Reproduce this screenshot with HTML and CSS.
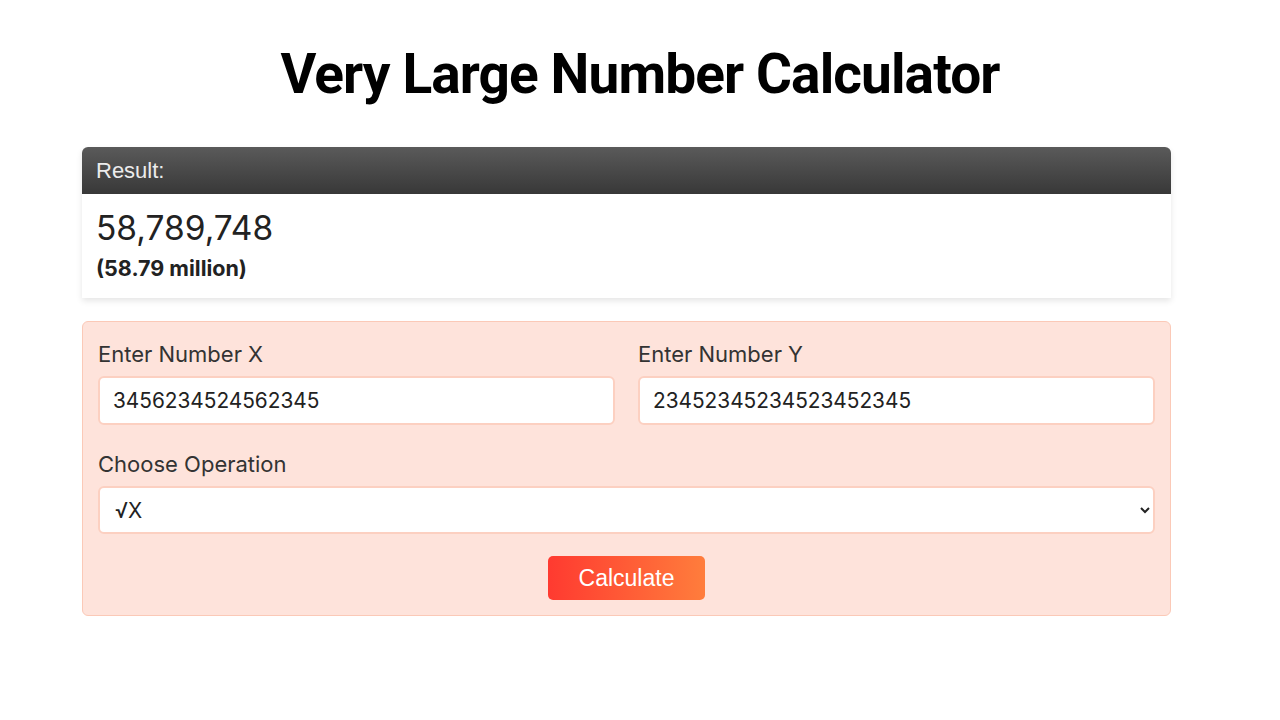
FILE: index.html
```html
<!DOCTYPE html>
<html>
<head>
    <title>Very Large Number Calculator</title>
    <meta charset="UTF-8">
    <meta name="viewport" content="width=device-width, initial-scale=1.0">
    <link rel="stylesheet" href="styles.css">
</head>
<body>
    <h1 class="page-title">Very Large Number Calculator</h1>

    <div class="calc-wrap">
        <div class="result-box">
            <div class="result-header">Result:</div>
            <div class="result-body">
                <div class="result-value" id="resultValue">58,789,748</div>
                <div class="result-words" id="resultWords">(58.79 million)</div>
            </div>
        </div>

        <div class="calc-form">
            <div class="field-row">
                <div class="field">
                    <label for="numX">Enter Number X</label>
                    <input type="text" id="numX" value="3456234524562345">
                </div>
                <div class="field">
                    <label for="numY">Enter Number Y</label>
                    <input type="text" id="numY" value="23452345234523452345">
                </div>
            </div>

            <div class="field">
                <label for="operation">Choose Operation</label>
                <select id="operation">
                    <option value="sqrt">&radic;X</option>
                    <option value="add">X + Y</option>
                    <option value="sub">X - Y</option>
                    <option value="mul">X &times; Y</option>
                </select>
            </div>

            <button id="calcButton">Calculate</button>
        </div>
    </div>
</body>
</html>
```

FILE: styles.css
```css
body {
    margin: 0;
    background: #fff;
    font-family: Inter, "Noto Sans", sans-serif;
    color: #2b2b2b;
}

.page-title {
    margin: 0;
    padding-top: 40px;
    text-align: center;
    font-family: Roboto, "Noto Sans", sans-serif;
    font-size: 55px;
    font-weight: 700;
    line-height: 68px;
    color: #000;
    letter-spacing: -0.9px;
}

.calc-wrap {
    width: 1089px;
    margin: 39px 0 0 82px;
}

.result-box {
    border-radius: 6px 6px 0 0;
    box-shadow: 0 3px 6px rgba(0,0,0,0.1);
}

.result-header {
    height: 47px;
    line-height: 47px;
    padding-left: 14px;
    background: linear-gradient(to bottom, #5a5a5a, #383838);
    border-radius: 6px 6px 0 0;
    font-family: "Liberation Sans", Arial, sans-serif;
    font-size: 22px;
    color: #ececec;
}

.result-body {
    height: 104px;
    padding: 14px 14px 0;
    box-sizing: border-box;
    background: #fff;
}

.result-value {
    font-size: 33.5px;
    line-height: 40px;
    color: #222;
}

.result-words {
    margin-top: 7px;
    font-size: 21.5px;
    line-height: 26px;
    font-weight: 700;
    color: #222;
}

.calc-form {
    margin-top: 23px;
    padding: 19px 15px 15px;
    background: #fee3db;
    border: 1px solid #fbc9b7;
    border-radius: 6px;
}

.field-row {
    display: grid;
    grid-template-columns: 1fr 1fr;
    gap: 23px;
    margin-bottom: 26px;
}

.field label {
    display: block;
    font-size: 22px;
    line-height: 26px;
    color: #333;
    margin-bottom: 9px;
}

.field input,
.field select {
    width: 100%;
    box-sizing: border-box;
    height: 49px;
    padding: 0 13px;
    border: 2px solid #fcd0c1;
    border-radius: 6px;
    background: #fff;
    font-family: Inter, "Noto Sans", sans-serif;
    font-size: 20.8px;
    color: #222;
    outline: none;
}

.field select {
    height: 48px;
    padding-left: 11px;
}

#calcButton {
    display: block;
    margin: 22px auto 0;
    width: 157px;
    height: 44px;
    border: none;
    border-radius: 5px;
    background: linear-gradient(to right, #ff3a30, #ff7d3c);
    font-family: "Liberation Sans", Arial, sans-serif;
    font-size: 23px;
    color: #fff;
    cursor: pointer;
}
```
